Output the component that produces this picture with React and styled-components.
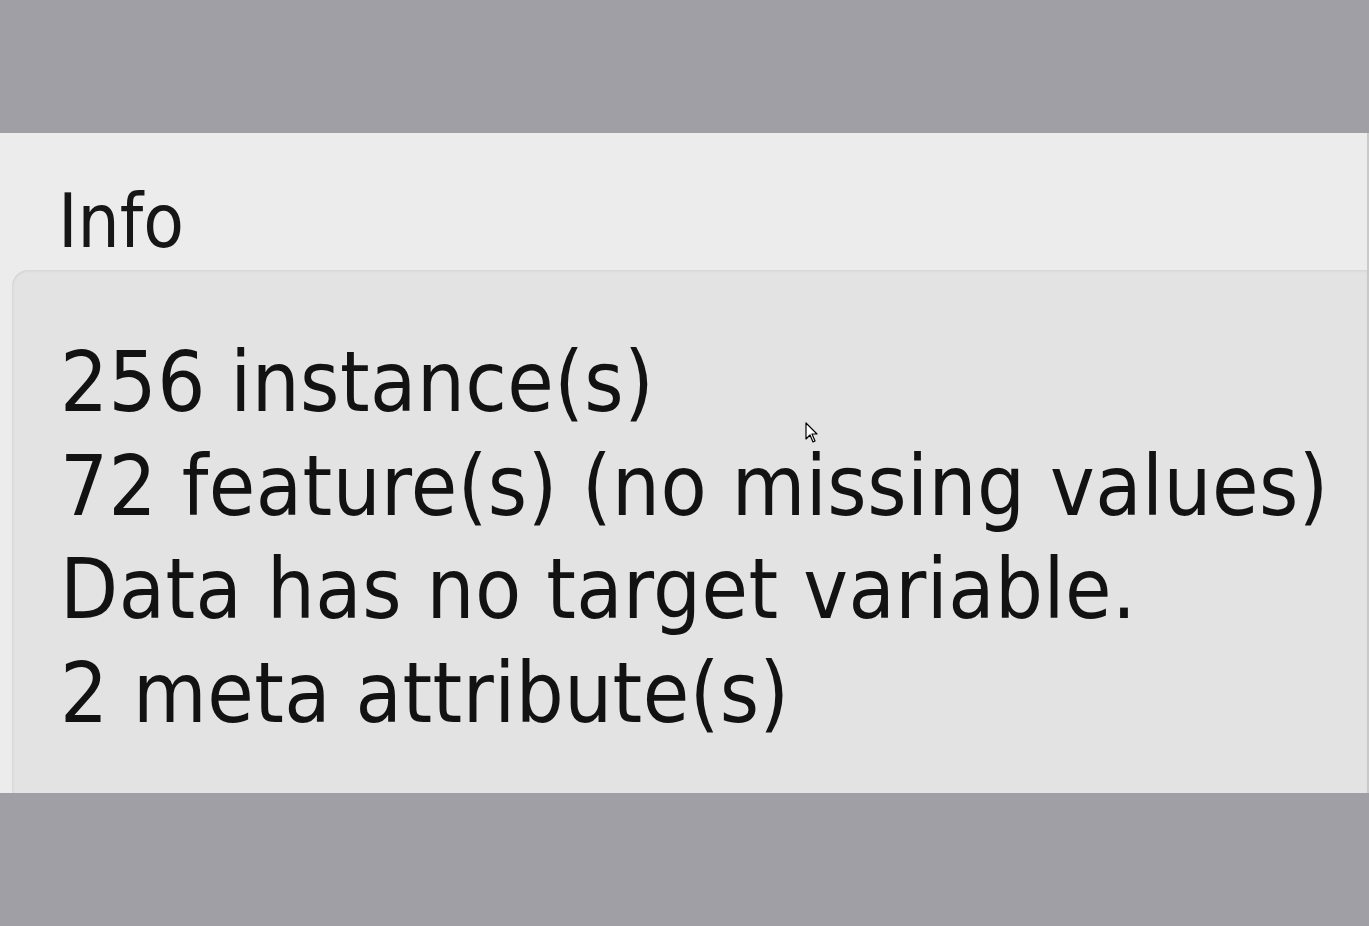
import styled, { createGlobalStyle } from 'styled-components';

const Global = createGlobalStyle`
  html, body {
    margin: 0;
    padding: 0;
    background: #a09fa5;
    overflow: hidden;
  }
`

const Band = styled.div`
  height: ${p => p.h}px;
  background: #a09fa5;
`

const Panel = styled.section`
  height: 660px;
  background: #ececec;
  overflow: hidden;
  position: relative;
  border-right: 2px solid #c9c9c9;
  box-sizing: border-box;
`

const Title = styled.div`
  font-family: 'DejaVu Sans Condensed', 'DejaVu Sans', sans-serif;
  font-size: 74px;
  line-height: 1;
  color: #161616;
  padding: 51px 0 0 58px;
  height: 137px;
  box-sizing: border-box;
`

const Box = styled.div`
  margin-left: 12px;
  background: #e3e3e3;
  border-top-left-radius: 16px;
  box-shadow: inset 0 2px 2px rgba(0, 0, 0, 0.04), inset 2px 0 2px rgba(0, 0, 0, 0.03);
  padding: 61px 0 0 48px;
  height: 600px;
`

const Line = styled.div`
  font-family: 'DejaVu Sans Condensed', 'DejaVu Sans', sans-serif;
  font-size: 84px;
  letter-spacing: 0.5px;
  line-height: 103.5px;
  color: #121212;
  white-space: nowrap;
`

const Cursor = styled.svg`
  position: absolute;
  left: 805px;
  top: 289px;
`

const lines = [
  '256 instance(s)',
  '72 feature(s) (no missing values)',
  'Data has no target variable.',
  '2 meta attribute(s)',
]

const App = () => (
  <>
    <Global />
    <Band h={133} />
    <Panel>
      <Title>Info</Title>
      <Box>
        {lines.map(l => <Line key={l}>{l}</Line>)}
      </Box>
      <Cursor width="14" height="22" viewBox="0 0 14 22">
        <path d="M1 1 L1 17 L5 13 L8 20 L10 19 L7 12 L12 12 Z" fill="#fff" stroke="#000" strokeWidth="1.2" strokeLinejoin="round" />
      </Cursor>
    </Panel>
    <Band h={133} />
  </>
)

export default App;
